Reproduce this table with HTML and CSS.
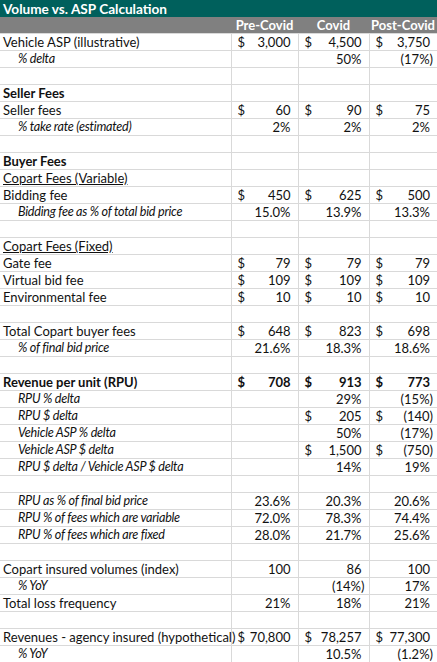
FILE: index.html
```html
<!DOCTYPE html>
<html lang="en">
<head>
  <meta charset="utf-8">
  <title>Volume vs. ASP Calculation</title>
  <link rel="stylesheet" href="styles.css">
</head>
<body>
  <table class="sheet">
    <colgroup>
      <col class="c-label">
      <col class="c-pre">
      <col class="c-covid">
      <col class="c-post">
    </colgroup>
    <tr class="title"><td colspan="4">Volume vs. ASP Calculation</td></tr>
    <tr class="head"><td></td><td>Pre-Covid</td><td>Covid</td><td>Post-Covid</td></tr>

    <tr><td>Vehicle ASP (illustrative)</td><td><span class="cur">$</span>3,000</td><td><span class="cur">$</span>4,500</td><td><span class="cur">$</span>3,750</td></tr>
    <tr><td class="sub">% delta</td><td></td><td>50%</td><td class="neg">(17%)</td></tr>
    <tr><td></td><td></td><td></td><td></td></tr>

    <tr class="bold"><td>Seller Fees</td><td></td><td></td><td></td></tr>
    <tr><td>Seller fees</td><td><span class="cur">$</span>60</td><td><span class="cur">$</span>90</td><td><span class="cur">$</span>75</td></tr>
    <tr><td class="sub">% take rate (estimated)</td><td class="tight">2%</td><td class="tight">2%</td><td class="tight">2%</td></tr>
    <tr><td></td><td></td><td></td><td></td></tr>

    <tr class="bold"><td>Buyer Fees</td><td></td><td></td><td></td></tr>
    <tr><td class="under">Copart Fees (Variable)</td><td></td><td></td><td></td></tr>
    <tr><td>Bidding fee</td><td><span class="cur">$</span>450</td><td><span class="cur">$</span>625</td><td><span class="cur">$</span>500</td></tr>
    <tr><td class="sub">Bidding fee as % of total bid price</td><td>15.0%</td><td>13.9%</td><td>13.3%</td></tr>
    <tr><td></td><td></td><td></td><td></td></tr>

    <tr><td class="under">Copart Fees (Fixed)</td><td></td><td></td><td></td></tr>
    <tr><td>Gate fee</td><td><span class="cur">$</span>79</td><td><span class="cur">$</span>79</td><td><span class="cur">$</span>79</td></tr>
    <tr><td>Virtual bid fee</td><td><span class="cur">$</span>109</td><td><span class="cur">$</span>109</td><td><span class="cur">$</span>109</td></tr>
    <tr><td>Environmental fee</td><td><span class="cur">$</span>10</td><td><span class="cur">$</span>10</td><td><span class="cur">$</span>10</td></tr>
    <tr><td></td><td></td><td></td><td></td></tr>

    <tr class="rule"><td>Total Copart buyer fees</td><td><span class="cur">$</span>648</td><td><span class="cur">$</span>823</td><td><span class="cur">$</span>698</td></tr>
    <tr><td class="sub">% of final bid price</td><td>21.6%</td><td>18.3%</td><td>18.6%</td></tr>
    <tr><td></td><td></td><td></td><td></td></tr>

    <tr class="rule bold"><td>Revenue per unit (RPU)</td><td><span class="cur">$</span>708</td><td><span class="cur">$</span>913</td><td><span class="cur">$</span>773</td></tr>
    <tr><td class="sub">RPU % delta</td><td></td><td>29%</td><td class="neg">(15%)</td></tr>
    <tr><td class="sub">RPU $ delta</td><td></td><td><span class="cur">$</span>205</td><td class="neg"><span class="cur">$</span>(140)</td></tr>
    <tr><td class="sub">Vehicle ASP % delta</td><td></td><td>50%</td><td class="neg">(17%)</td></tr>
    <tr><td class="sub">Vehicle ASP $ delta</td><td></td><td><span class="cur">$</span>1,500</td><td class="neg"><span class="cur">$</span>(750)</td></tr>
    <tr><td class="sub">RPU $ delta / Vehicle ASP $ delta</td><td></td><td>14%</td><td>19%</td></tr>
    <tr><td></td><td></td><td></td><td></td></tr>

    <tr><td class="sub">RPU as % of final bid price</td><td>23.6%</td><td>20.3%</td><td>20.6%</td></tr>
    <tr><td class="sub">RPU % of fees which are variable</td><td>72.0%</td><td>78.3%</td><td>74.4%</td></tr>
    <tr><td class="sub">RPU % of fees which are fixed</td><td>28.0%</td><td>21.7%</td><td>25.6%</td></tr>
    <tr><td></td><td></td><td></td><td></td></tr>

    <tr><td>Copart insured volumes (index)</td><td>100</td><td>86</td><td>100</td></tr>
    <tr><td class="sub">% YoY</td><td></td><td class="neg">(14%)</td><td>17%</td></tr>
    <tr><td>Total loss frequency</td><td>21%</td><td>18%</td><td>21%</td></tr>
    <tr><td></td><td></td><td></td><td></td></tr>

    <tr><td>Revenues - agency insured (hypothetical)</td><td><span class="cur">$</span>70,800</td><td><span class="cur">$</span>78,257</td><td><span class="cur">$</span>77,300</td></tr>
    <tr><td class="sub">% YoY</td><td></td><td>10.5%</td><td class="neg">(1.2%)</td></tr>
  </table>
</body>
</html>
```

FILE: styles.css
```css
body {
  margin: 0;
  background: #ffffff;
  font-family: Lato, "Open Sans", sans-serif;
  font-size: 13px;
  color: #111;
}

.sheet {
  width: 437px;
  border-collapse: collapse;
  table-layout: fixed;
}

.c-label { width: 231px; }
.c-pre   { width: 67px; }
.c-covid { width: 71px; }
.c-post  { width: 68px; }

.sheet td {
  height: 16px;
  padding: 0 7px 0 0;
  line-height: 16px;
  text-align: right;
  white-space: nowrap;
  vertical-align: bottom;
  border-bottom: 1px solid #d9d9d9;
  border-left: 1px solid #d9d9d9;
}

.sheet td:first-child {
  padding: 0 0 0 3px;
  text-align: left;
  border-left: none;
  overflow: visible;
}

.sheet td.neg {
  padding-right: 4px;
}

.sheet td.tight {
  padding-right: 7px;
}

.cur {
  float: left;
  padding-left: 6px;
}

/* italic sub rows, narrowed to match the sheet's italic face */
.sheet td.sub {
  padding-left: 18px;
  font-style: italic;
  font-size: 12.6px;
  letter-spacing: -0.25px;
}

.under {
  text-decoration: underline;
}

.bold td {
  font-weight: 700;
}

/* banner rows */
.title td {
  background: #00605c;
  color: #fff;
  font-weight: 700;
  font-size: 13.6px;
  border: none;
  height: 17px;
}

.head td {
  background: #808080;
  color: #fff;
  font-weight: 700;
  text-align: center;
  padding: 0;
  border-left: none;
  border-bottom: 1px solid #d9d9d9;
}

.rule td {
  border-top: 1px solid #000;
}
```
